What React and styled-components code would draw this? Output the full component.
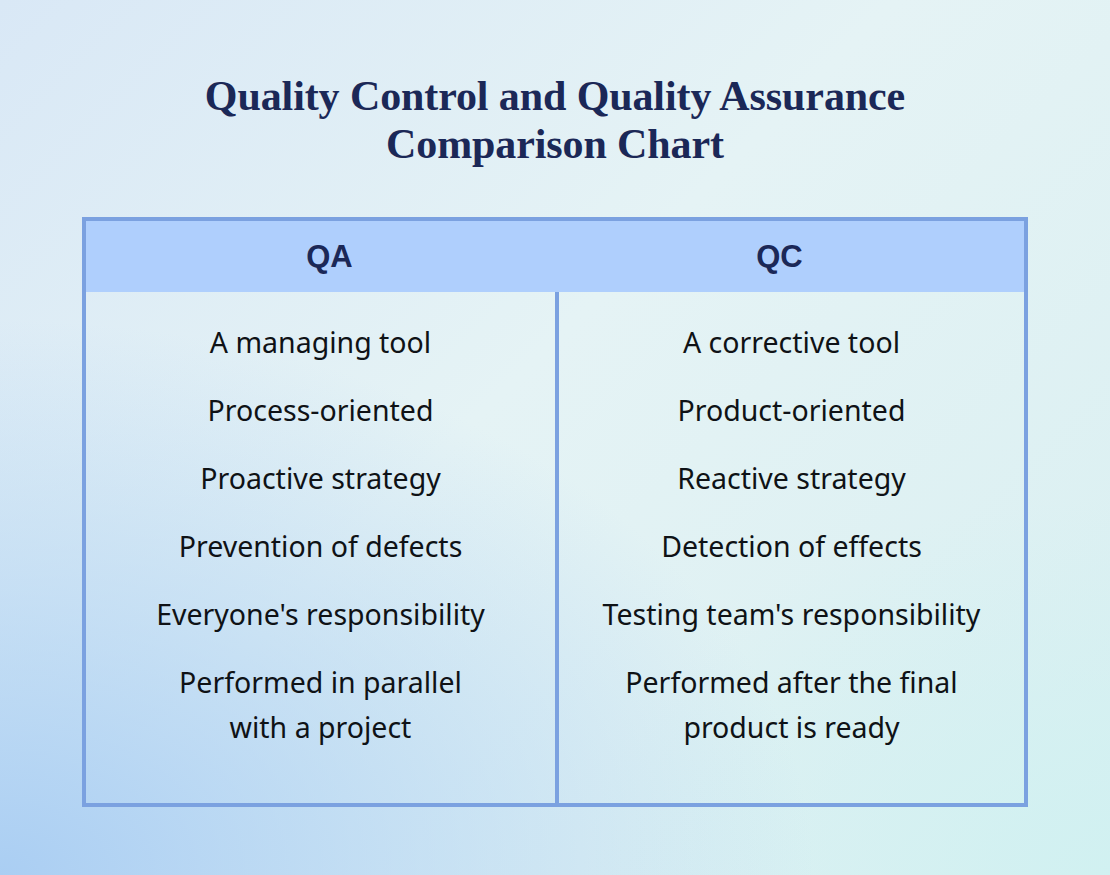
import styled, { createGlobalStyle } from 'styled-components';

const GlobalStyle = createGlobalStyle`
  html, body { margin: 0; padding: 0; }
  body { width: 1110px; height: 875px; overflow: hidden; }
`;

const Page = styled.div`
  width: 1110px;
  height: 875px;
  box-sizing: border-box;
  padding-top: 72px;
  display: flex;
  flex-direction: column;
  align-items: center;
  background:
    radial-gradient(ellipse 1100px 750px at 0% 100%, rgba(170, 206, 243, 1), rgba(170, 206, 243, 0) 74%),
    radial-gradient(ellipse 700px 500px at 100% 100%, rgba(208, 241, 241, 0.9), rgba(208, 241, 241, 0) 75%),
    linear-gradient(135deg, #d9e8f6 0%, #e5f3f5 45%, #d8eff1 100%);
`;

const Title = styled.h1`
  margin: 0;
  font-family: 'Liberation Serif', 'DejaVu Serif', serif;
  font-weight: 700;
  font-size: 42px;
  line-height: 48px;
  letter-spacing: -0.1px;
  color: #1b2857;
  text-align: center;
`;

const Table = styled.div`
  margin-top: 49px;
  width: 946px;
  box-sizing: border-box;
  border: 4px solid #7ba1e0;
  display: grid;
  grid-template-columns: 469px 1fr;
`;

const HeadCell = styled.div`
  height: 71px;
  background: #afcffd;
  display: flex;
  align-items: center;
  justify-content: center;
  padding-left: ${p => p.$shift > 0 ? p.$shift : 0}px;
  padding-right: ${p => p.$shift < 0 ? -p.$shift : 0}px;
  font-family: 'Liberation Sans', Arial, sans-serif;
  font-weight: 700;
  font-size: 31px;
  color: #1b2857;
`;

const Column = styled.div`
  display: flex;
  flex-direction: column;
  align-items: center;
  gap: 23px;
  padding: 28px 0 53px;
  border-left: ${p => p.$divided ? '4px solid #7ba1e0' : 'none'};
`;

const Item = styled.div`
  font-family: 'Noto Sans', 'Open Sans', sans-serif;
  font-size: 28.5px;
  line-height: 45px;
  color: #0f1216;
  text-align: center;
`;

const qa = [
  'A managing tool',
  'Process-oriented',
  'Proactive strategy',
  'Prevention of defects',
  "Everyone's responsibility",
  ['Performed in parallel', 'with a project'],
];

const qc = [
  'A corrective tool',
  'Product-oriented',
  'Reactive strategy',
  'Detection of effects',
  "Testing team's responsibility",
  ['Performed after the final', 'product is ready'],
];

function renderItem(text, i) {
  if (Array.isArray(text)) {
    return (
      <Item key={i}>
        {text[0]}<br />{text[1]}
      </Item>
    );
  }
  return <Item key={i}>{text}</Item>;
}

export default function App() {
  return (
    <Page>
      <GlobalStyle />
      <Title>
        Quality Control and Quality Assurance<br />Comparison Chart
      </Title>
      <Table>
        <HeadCell $shift={18}>QA</HeadCell>
        <HeadCell $shift={-20}>QC</HeadCell>
        <Column>{qa.map(renderItem)}</Column>
        <Column $divided>{qc.map(renderItem)}</Column>
      </Table>
    </Page>
  );
}
